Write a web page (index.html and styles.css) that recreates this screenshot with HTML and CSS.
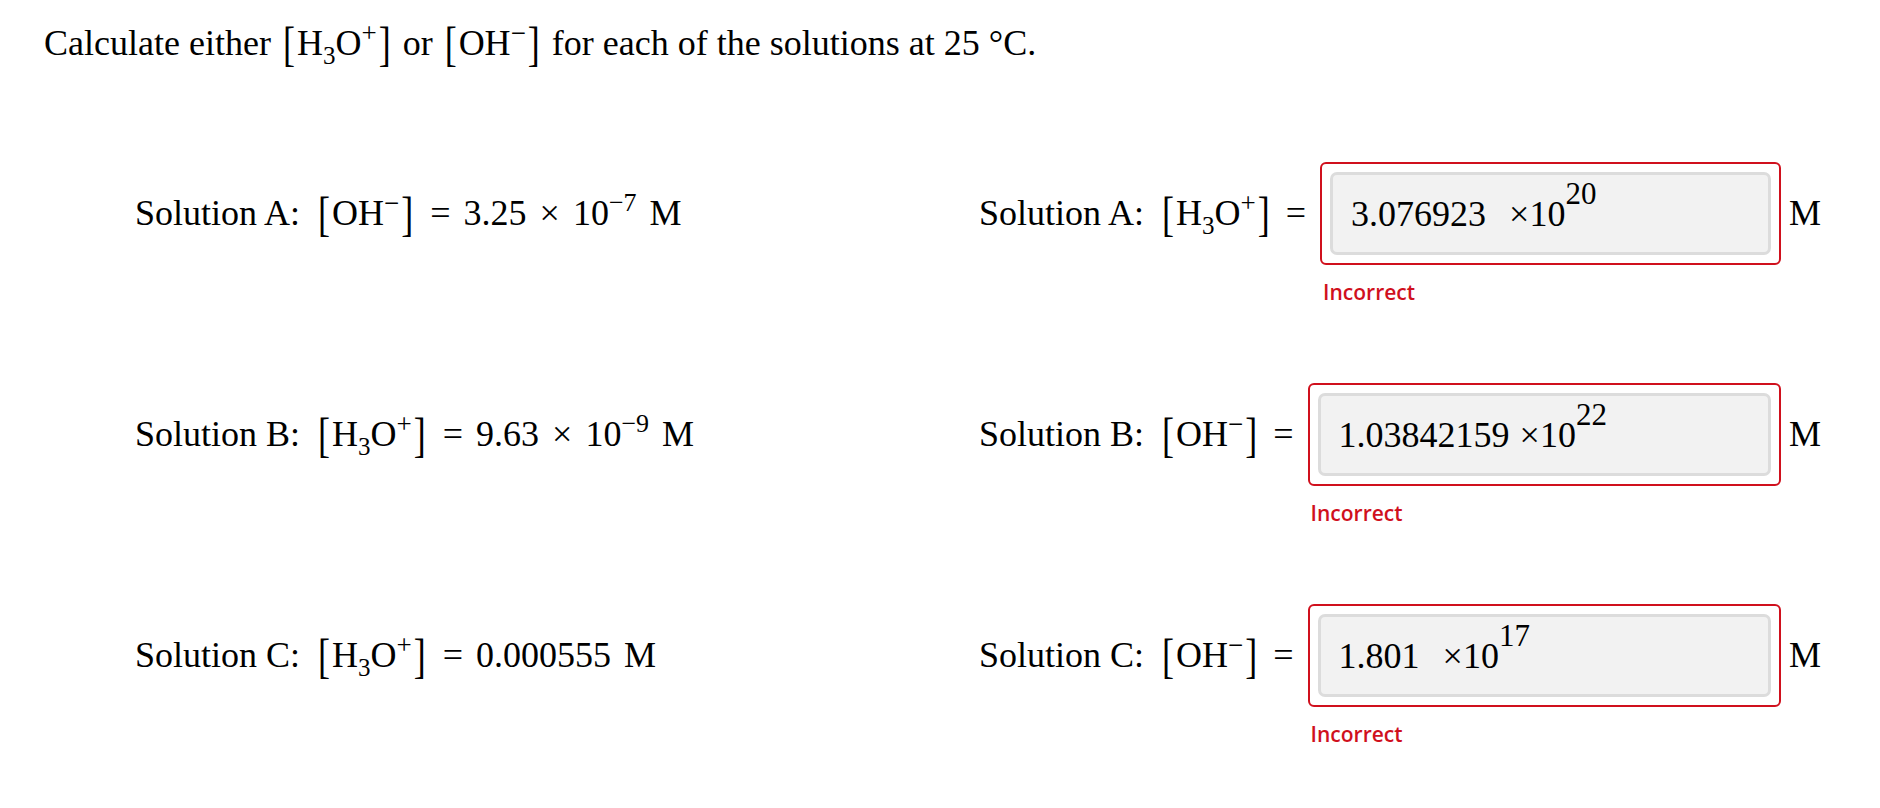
FILE: index.html
```html
<!DOCTYPE html>
<html lang="en">
<head>
<meta charset="utf-8">
<title>Calculate [H3O+] or [OH-]</title>
<link rel="stylesheet" href="styles.css">
</head>
<body>
<div class="page">
  <p class="title">Calculate either <span class="chem tt"><span class="br">[</span>H<sub class="ix">3</sub>O<sup class="chg">+</sup><span class="br bc">]</span></span> or <span class="chem tt"><span class="br">[</span>OH<sup class="chg">−</sup><span class="br bc">]</span></span> for each of the solutions at 25 °C.</p>

  <div class="rows">
    <div class="row">
      <div class="given">Solution A: <span class="chem gap"><span class="br">[</span>OH<sup class="chg">−</sup><span class="br bc">]</span></span><span class="rel">=</span>3.25<span class="op">×</span>10<sup class="exp">−7</sup><span class="u">M</span></div>
      <div class="answer">
        <div class="lbl">Solution A: <span class="chem gap"><span class="br">[</span>H<sub class="ix">3</sub>O<sup class="chg">+</sup><span class="br bc">]</span></span><span class="eq">=</span></div>
        <div class="field">
          <div class="box"><div class="inner"><span class="num"><span class="mant">3.076923</span>×10<sup class="pow">20</sup></span></div></div>
          <div class="fb">Incorrect</div>
        </div>
        <div class="unit">M</div>
      </div>
    </div>

    <div class="row">
      <div class="given">Solution B: <span class="chem gap"><span class="br">[</span>H<sub class="ix">3</sub>O<sup class="chg">+</sup><span class="br bc">]</span></span><span class="rel">=</span>9.63<span class="op">×</span>10<sup class="exp">−9</sup><span class="u">M</span></div>
      <div class="answer">
        <div class="lbl">Solution B: <span class="chem gap"><span class="br">[</span>OH<sup class="chg">−</sup><span class="br bc">]</span></span><span class="eq">=</span></div>
        <div class="field">
          <div class="box"><div class="inner"><span class="num"><span class="mant tight">1.03842159</span>×10<sup class="pow">22</sup></span></div></div>
          <div class="fb">Incorrect</div>
        </div>
        <div class="unit">M</div>
      </div>
    </div>

    <div class="row">
      <div class="given">Solution C: <span class="chem gap"><span class="br">[</span>H<sub class="ix">3</sub>O<sup class="chg">+</sup><span class="br bc">]</span></span><span class="rel">=</span>0.000555<span class="u">M</span></div>
      <div class="answer">
        <div class="lbl">Solution C: <span class="chem gap"><span class="br">[</span>OH<sup class="chg">−</sup><span class="br bc">]</span></span><span class="eq">=</span></div>
        <div class="field">
          <div class="box"><div class="inner"><span class="num"><span class="mant">1.801</span>×10<sup class="pow">17</sup></span></div></div>
          <div class="fb">Incorrect</div>
        </div>
        <div class="unit">M</div>
      </div>
    </div>
  </div>
</div>
</body>
</html>
```

FILE: styles.css
```css
html, body {
  margin: 0;
  padding: 0;
  background: #ffffff;
}

body {
  font-family: "Liberation Serif", "Times New Roman", serif;
  color: #000000;
  font-size: 36px;
}

.page {
  padding: 19px 0 0 44px;
}

.title {
  margin: 0;
  font-size: 36px;
  line-height: 48px;
  white-space: nowrap;
}

.chem {
  white-space: nowrap;
}

.chem.tt {
  margin: 0 3px;
}

.chem.gap {
  margin-left: 9px;
}

.br {
  display: inline-block;
  transform: scaleY(1.32) translateY(1px);
  margin-right: 2px;
}

.br.bc {
  margin-right: 0;
  margin-left: 2px;
}

.ix {
  font-size: 25px;
  line-height: 0;
  vertical-align: -9px;
}

.chg {
  font-size: 27px;
  line-height: 0;
  vertical-align: 13px;
}

.exp {
  font-size: 26px;
  line-height: 0;
  vertical-align: 14px;
}

.rel {
  margin: 0 13px 0 17px;
}

.op {
  margin: 0 13px;
}

.u {
  margin-left: 13px;
}

.rows {
  margin-top: 95px;
  margin-left: 91px;
  display: flex;
  flex-direction: column;
  gap: 77px;
}

.row {
  display: grid;
  grid-template-columns: 844px 842px;
  align-items: start;
}

.given {
  line-height: 103px;
  white-space: nowrap;
}

.answer {
  display: flex;
  align-items: flex-start;
}

.lbl {
  line-height: 103px;
  white-space: nowrap;
}

.eq {
  margin-left: 16px;
}

.field {
  flex: 1;
  margin-left: 14px;
  display: flex;
  flex-direction: column;
}

.box {
  height: 103px;
  box-sizing: border-box;
  border: 2px solid #d0101d;
  border-radius: 6px;
  padding: 8px;
}

.inner {
  height: 83px;
  box-sizing: border-box;
  border: 3px solid #dcdcdc;
  border-radius: 7px;
  background: #f2f2f2;
  padding-left: 18px;
  display: flex;
  align-items: center;
  color: #000;
}

.num {
  line-height: 48px;
  white-space: nowrap;
}

.mant {
  margin-right: 23px;
}

.mant.tight {
  margin-right: 10px;
}

.pow {
  font-size: 31px;
  line-height: 0;
  vertical-align: 22px;
}

.fb {
  margin-top: 13px;
  padding-left: 3px;
  font-family: "Open Sans", "Liberation Sans", sans-serif;
  font-weight: 600;
  font-size: 21px;
  line-height: 28px;
  color: #d0101d;
}

.unit {
  margin-left: 8px;
  line-height: 103px;
}
```
